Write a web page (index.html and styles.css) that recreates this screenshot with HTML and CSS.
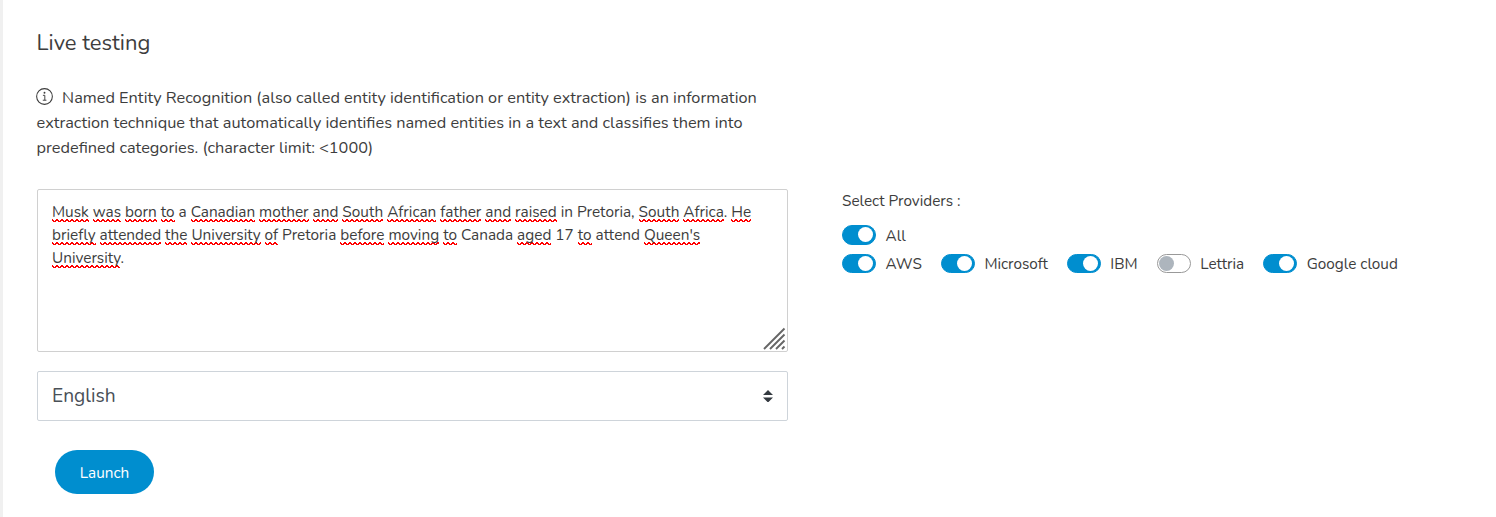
FILE: index.html
```
<!DOCTYPE html>
<html lang="en">
<head>
  <meta charset="UTF-8">
  <title>Live testing</title>
  <link rel="stylesheet" href="styles.css">
</head>
<body>
  <main class="live-testing">
    <h1>Live testing</h1>

    <p class="description">
      <span class="line"><svg class="info-icon" viewBox="0 0 16 16" width="17" height="17">
        <circle cx="8" cy="8" r="7.4" fill="none" stroke="currentColor"/>
        <path d="M6.5 6.9H8.3V11.4M6.4 11.5H9.8" fill="none" stroke="currentColor" stroke-width=".9"/>
        <circle cx="8" cy="4.4" r=".9" fill="currentColor"/>
      </svg>Named Entity Recognition (also called entity identification or entity extraction) is an information</span>
      <span class="line">extraction technique that automatically identifies named entities in a text and classifies them into</span>
      <span class="line">predefined categories. (character limit: &lt;1000)</span>
    </p>

    <div class="columns">
      <form class="test-form">
        <div class="text-input" role="textbox">
          <span class="line"><u>Musk</u> <u>was</u> <u>born</u> <u>to</u> a <u>Canadian</u> <u>mother</u> <u>and</u> <u>South</u> <u>African</u> <u>father</u> <u>and</u> <u>raised</u> in Pretoria, <u>South</u> <u>Africa</u>. <u>He</u></span>
          <span class="line"><u>briefly</u> <u>attended</u> <u>the</u> <u>University</u> <u>of</u> Pretoria <u>before</u> <u>moving</u> <u>to</u> Canada <u>aged</u> 17 <u>to</u> attend <u>Queen's</u></span>
          <span class="line"><u>University</u>.</span>
          <svg class="resize-handle" viewBox="0 0 24 24" width="24" height="24">
            <path d="M1 22L21.5 1.5M7 22L21.5 7.5M13 22L21.5 13.5M19 22L21.5 19.5"/>
          </svg>
        </div>

        <div class="language" role="combobox">
          <span>English</span>
          <svg viewBox="0 0 4 5" width="10" height="12.5"><path d="M2 0L0 2h4zm0 5L0 3h4z" fill="#343a40"/></svg>
        </div>

        <button type="button" class="launch">Launch</button>
      </form>

      <div class="providers">
        <p>Select Providers :</p>
        <div class="row">
          <label class="provider"><i class="switch on tall"></i><span>All</span></label>
        </div>
        <div class="row">
          <label class="provider"><i class="switch on"></i><span>AWS</span></label>
          <label class="provider"><i class="switch on"></i><span>Microsoft</span></label>
          <label class="provider"><i class="switch on"></i><span>IBM</span></label>
          <label class="provider"><i class="switch"></i><span>Lettria</span></label>
          <label class="provider"><i class="switch on"></i><span>Google cloud</span></label>
        </div>
      </div>
    </div>
  </main>
</body>
</html>
```
FILE: styles.css
```
* {
  box-sizing: border-box;
}
body {
  margin: 0;
  height: 517px;
  overflow: hidden;
  background-color: #fff;
  color: #3d3d3d;
  font-family: Nunito, Lato, sans-serif;
  font-size: 16px;
}
.live-testing {
  height: 517px;
  padding: 27px 0 0 33.6px;
  border-left: 3px solid #f0f0f0;
}
h1 {
  margin: 0 0 26px;
  font-size: 22px;
  font-weight: 400;
  line-height: 33px;
}
.description {
  margin: 0 0 28px;
  font-size: 16.31px;
  line-height: 25px;
}
.line {
  display: block;
  white-space: nowrap;
}
.info-icon {
  margin-right: 9px;
  margin-left: -0.5px;
  vertical-align: -1.5px;
}
.columns {
  display: flex;
  gap: 54px;
  padding-left: 0.4px;
}
.test-form {
  width: 751px;
}
.text-input {
  position: relative;
  height: 163px;
  padding: 10px 14px;
  border: 1px solid #d0d0d0;
  border-radius: 2px;
  font-size: 15.36px;
  line-height: 23px;
}
/* spell-checker marks */
u {
  text-decoration: none;
  background: url("data:image/svg+xml,%3Csvg xmlns='http://www.w3.org/2000/svg' width='5' height='3' shape-rendering='crispEdges'%3E%3Cpath d='M0 0h1v1h-1zM4 0h1v1h-1zM0 1h2v1h-2zM3 1h2v1h-2zM1 2h3v1h-3z' fill='red'/%3E%3C/svg%3E") left bottom repeat-x;
}
.resize-handle {
  position: absolute;
  right: 0;
  bottom: 0;
  fill: none;
  stroke: #666;
  stroke-width: 1.9;
}
.language {
  display: flex;
  align-items: center;
  justify-content: space-between;
  height: 50px;
  margin-top: 19px;
  padding: 0 14px;
  border: 1px solid #ced4da;
  border-radius: 2px;
  color: #495057;
  font-size: 19.2px;
}
.launch {
  width: 99px;
  height: 44px;
  margin: 29px 0 0 18px;
  padding: 1px 0 0;
  border: none;
  border-radius: 22px;
  background-color: #008ecf;
  color: #fff;
  font: inherit;
  font-size: 15.3px;
}
.providers {
  font-size: 15.3px;
}
.providers p {
  margin: 1px 0 11px;
  line-height: 23px;
}
.row {
  display: flex;
  gap: 19px;
  height: 28px;
}
.provider {
  display: flex;
  align-items: center;
  gap: 9.5px;
  height: 23px;
  white-space: nowrap;
}
.switch {
  width: 34px;
  height: 19px;
  padding: 2px;
  border: 1px solid #999;
  border-radius: 10px;
}
.switch.tall {
  height: 20px;
  margin-bottom: 2px;
}
.switch::before {
  content: "";
  display: block;
  width: 15px;
  height: 15px;
  margin: -1px 0 0 -1px;
  border-radius: 50%;
  background-color: #adb5bd;
}
.switch.on {
  border-color: #008ecf;
  background-color: #008ecf;
}
.switch.on::before {
  margin-left: 13px;
  background-color: #fff;
}
```
